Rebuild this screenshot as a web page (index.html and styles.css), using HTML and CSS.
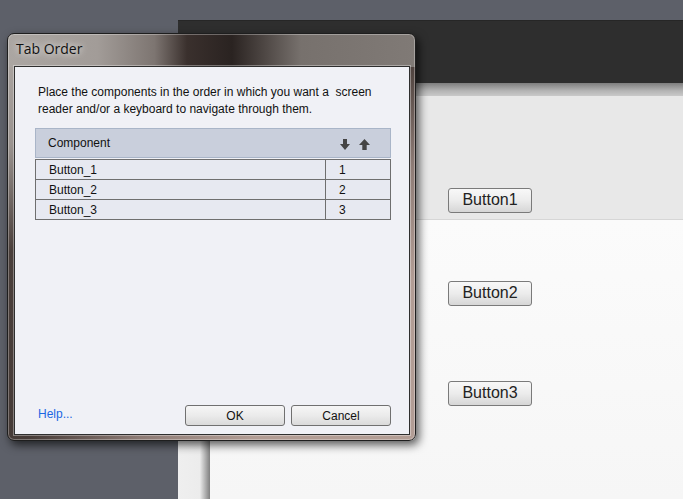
FILE: index.html
```html
<!DOCTYPE html>
<html lang="en">
<head>
    <meta charset="UTF-8">
    <title>Tab Order</title>
    <link rel="stylesheet" href="styles.css">
</head>
<body>

<div class="app">
    <div class="app-top"></div>
    <div class="app-bar"></div>
    <div class="app-body">
        <div class="side"></div>
        <div class="page">
            <div class="page-head">
                <button class="form-btn">Button1</button>
            </div>
            <div class="page-main">
                <button class="form-btn first">Button2</button>
                <button class="form-btn second">Button3</button>
            </div>
        </div>
    </div>
</div>

<!-- dialog window over the app -->
<div class="dialog">
    <div class="dialog-title">Tab Order</div>
    <div class="client">
        <p class="intro">Place the components in the order in which you want a &nbsp;screen reader and/or a keyboard to navigate through them.</p>

        <div class="order-head">
            <span>Component</span>
            <span class="arrows">
                <svg width="10" height="11" viewBox="0 0 10 11"><path d="M3 0h4v5h3l-5 6-5-6h3z" fill="#444"/></svg>
                <svg width="11" height="11" viewBox="0 0 11 11"><path d="M5.5 0l5.5 6h-3.3v5h-4.4v-5h-3.3z" fill="#444"/></svg>
            </span>
        </div>
        <table class="order">
            <tr><td>Button_1</td><td class="num">1</td></tr>
            <tr><td>Button_2</td><td class="num">2</td></tr>
            <tr><td>Button_3</td><td class="num">3</td></tr>
        </table>

        <div class="footer">
            <a href="#" class="help">Help...</a>
            <button class="btn">OK</button>
            <button class="btn">Cancel</button>
        </div>
    </div>
</div>

</body>
</html>
```

FILE: styles.css
```css
body {
    margin: 0;
    height: 499px;
    overflow: hidden;
    background-color: #5d6069;
    font-family: "Liberation Sans", Arial, sans-serif;
}
.app {
    margin: 20px 0 0 178px;
    height: 479px;
    display: flex;
    flex-direction: column;
}
.app-top {
    height: 62px;
    background-color: #2e2e2e;
    border-top: 1px solid #262626;
}
.app-bar {
    height: 13px;
    background: linear-gradient(to bottom, #7e7e7e, #b4b4b4 60%, #c9c9c9);
}
.app-body {
    flex-grow: 1;
    display: flex;
}
.side {
    width: 32px;
    background: linear-gradient(to right, #efefef, #ececec 68%, #9a9a9a 92%, #808080);
}
.page {
    flex-grow: 1;
    display: flex;
    flex-direction: column;
}
.page-head {
    height: 124px;
    background-color: #e8e8e8;
    border-bottom: 1px solid #d6d6d6;
    padding-left: 238px;
    display: flex;
    align-items: flex-end;
    box-sizing: border-box;
}
.page-head .form-btn {
    margin-bottom: 6px;
}
.page-main {
    flex-grow: 1;
    background: linear-gradient(to bottom, #fbfbfb, #f6f6f6);
    padding-left: 238px;
    display: flex;
    flex-direction: column;
    align-items: flex-start;
}
.form-btn {
    width: 84px;
    height: 25px;
    padding: 0 0 2px;
    font-family: "Liberation Sans", Arial, sans-serif;
    font-size: 16px;
    color: #222;
    background: linear-gradient(to bottom, #f8f8f8, #ececec 50%, #d6d6d6);
    border: 1px solid #7a7a7a;
    border-radius: 3px;
}
.form-btn.first {
    margin-top: 61px;
}
.form-btn.second {
    margin-top: 75px;
}

.dialog {
    position: absolute;
    left: 7px;
    top: 33px;
    width: 409px;
    height: 408px;
    box-sizing: border-box;
    border: 1px solid #1e1e1e;
    border-radius: 7px;
    box-shadow: 3px 4px 10px rgba(0, 0, 0, 0.65), inset 0 0 0 1px rgba(255, 255, 255, 0.3);
    background:
        linear-gradient(to right, #aba6a2 0%, #a29c98 22%, #7d7571 36%, #3a302d 44%, #2a2321 55%, #4e4744 63%, #77716d 72%, #807a76 100%) top / 100% 33px no-repeat,
        linear-gradient(135deg, #b0aaa6 0%, #9a938f 14%, #4a3f3b 27%, #463b37 52%, #8e7c76 66%, #b29d95 80%);
    display: flex;
    flex-direction: column;
    padding: 0 5px 5px 6px;
}
.dialog-title {
    height: 32px;
    line-height: 30px;
    padding-left: 2px;
    font-family: "Open Sans", "Noto Sans", sans-serif;
    font-size: 14px;
    color: #111;
    text-shadow: 0 0 6px rgba(255, 255, 255, 0.7), 0 0 10px rgba(255, 255, 255, 0.5);
}
.client {
    flex-grow: 1;
    background-color: #f0f1f6;
    border: 1px solid #2e2e2e;
    box-shadow: 0 0 0 1px rgba(255, 255, 255, 0.35);
    padding: 17px 18px 8px 20px;
    display: flex;
    flex-direction: column;
    font-size: 12px;
    color: #111;
}
.intro {
    margin: 0 0 10px 3px;
    line-height: 17px;
}
.order-head {
    height: 28px;
    background-color: #c9cfdc;
    border: 1px solid #a9b5c8;
    display: flex;
    align-items: center;
    justify-content: space-between;
    padding: 0 20px 0 12px;
}
.arrows {
    display: flex;
    gap: 9px;
    padding-top: 2px;
}
.order {
    margin-top: 1px;
    width: 356px;
    border-collapse: collapse;
}
.order td {
    height: 19px;
    padding: 0 0 0 13px;
    background-color: #e7e9f1;
    border: 1px solid #6f6f6f;
}
.order td.num {
    width: 51px;
}
.footer {
    margin-top: auto;
    display: flex;
    align-items: center;
}
.help {
    color: #1b67e3;
    text-decoration: none;
    margin-left: 3px;
    margin-right: auto;
    margin-top: -4px;
}
.btn {
    width: 100px;
    height: 21px;
    margin-left: 6px;
    font-family: "Liberation Sans", Arial, sans-serif;
    font-size: 12px;
    color: #111;
    background: linear-gradient(to bottom, #f6f6f6, #ebebeb 50%, #dadada);
    border: 1px solid #707070;
    border-radius: 3px;
}
```
